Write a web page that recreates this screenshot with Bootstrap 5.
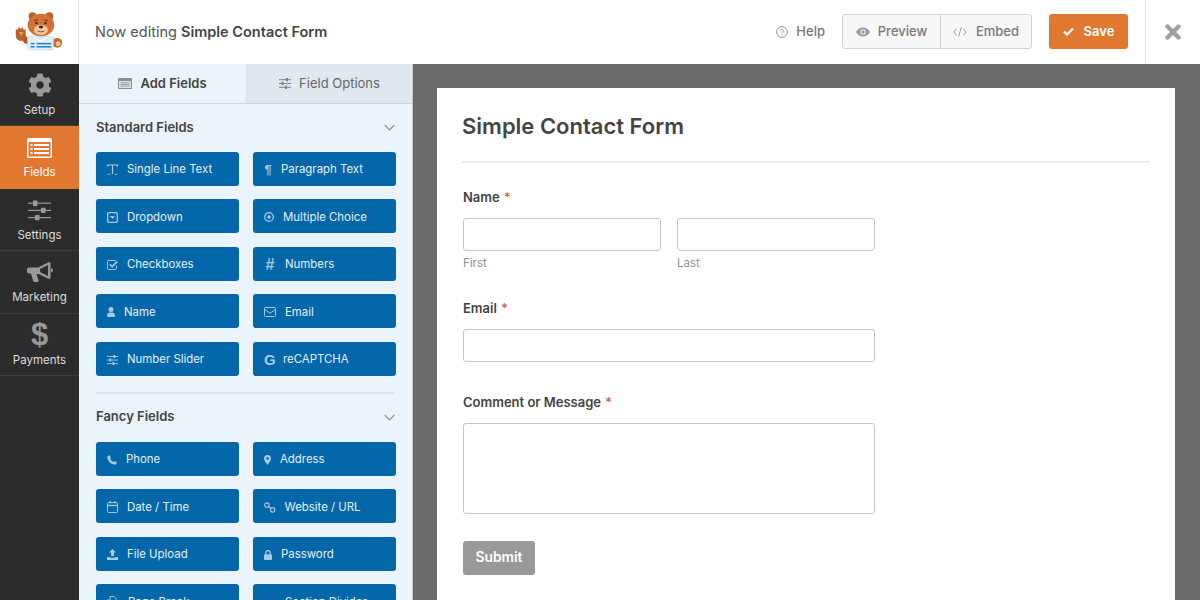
<!DOCTYPE html>
<html lang="en">
<head>
    <meta charset="UTF-8">
    <meta name="viewport" content="width=device-width, initial-scale=1.0">
    <title>Form Builder</title>
    <link href="https://cdn.jsdelivr.net/npm/bootstrap@5.3.0/dist/css/bootstrap.min.css" rel="stylesheet">
    <style>
        html, body { height: 600px; overflow: hidden; }
        body { font-family: Inter, "Liberation Sans", sans-serif; color: #444; background: #6b6b6b; }

        /* top bar */
        .top-bar { height: 63.5px; background: #fff; }
        .logo-cell { width: 79px; border-right: 1px solid #e4e4e4; }
        .now-editing { font-size: 14.5px; color: #555; padding-left: 16px; }
        .now-editing strong { font-weight: 600; color: #444; }
        .help-link { font-size: 13px; font-weight: 500; color: #777; margin-right: 17px; gap: 8px; }
        .top-btn { height: 35px; font-size: 13px; font-weight: 500; color: #777; background: #f8f8f8; border: 1px solid #d2d2d2; border-radius: 3px; gap: 9px; padding: 0 12px; }
        .top-btn.preview-btn { width: 99px; gap: 8px; }
        .top-btn.embed-btn { width: 92px; }
        .save-btn { width: 79px; height: 35px; margin-left: 17px; font-size: 13px; font-weight: 600; color: #fff; background: #e27730; border: 0; border-radius: 3px; gap: 10px; padding: 0; }
        .close-cell { width: 55px; margin-left: 17px; border-left: 1px solid #e4e4e4; }

        /* left rail */
        .main-area { height: 536.5px; }
        .side-rail { width: 79px; background: #2c2c2c; flex-shrink: 0; }
        .rail-item { height: 62.5px; color: #ddd; font-size: 11.5px; border-bottom: 1px solid #3d3d3d; padding-top: 7.5px; }
        .rail-item.current { background: #e27730; color: #fff; border-bottom-color: #e27730; }
        .rail-icon { height: 28px; margin-bottom: 2.5px; }
        .rail-dollar { font-family: "Liberation Sans", sans-serif; font-size: 31px; font-weight: 700; line-height: 28px; color: #999; }

        /* fields panel */
        .field-panel { width: 334px; background: #ebf3fb; border-right: 1px solid #c8ccd0; flex-shrink: 0; overflow: hidden; }
        .panel-tab { height: 40.5px; font-size: 13px; gap: 8px; }
        .panel-tab.on { width: 167px; font-weight: 600; color: #444; background: #ebf3fb; border-bottom: 1px solid #ced7e0; }
        .panel-tab.off { flex-grow: 1; color: #666; background: #e0e8f0; border-bottom: 1px solid #ced7e0; border-left: 1px solid #d8dfe6; }
        .panel-body { padding: 0 17px 0 17px; }
        .group-title { height: 47.8px; font-size: 13px; font-weight: 600; color: #444; padding-bottom: 1px; }
        .button-grid { display: grid; grid-template-columns: 143px 143px; column-gap: 14px; row-gap: 13.5px; }
        .field-btn { height: 34px; background: #0367a9; color: #e4f0fb; font-size: 11.4px; border: 0; border-radius: 3px; padding: 2px 0 0 11px; gap: 9px; white-space: nowrap; }
        .field-btn:hover { background: #0367a9; color: #e4f0fb; }
        .field-btn svg { flex-shrink: 0; }
        .field-glyph { color: #a6cbea; font-weight: 700; font-family: "Liberation Sans", sans-serif; text-align: center; flex-shrink: 0; }
        .paragraph-mark { width: 8px; font-size: 13px; }
        .number-mark { width: 12px; font-size: 16px; }
        .g-mark { width: 10px; font-size: 15px; }
        .group-rule { border: 0; border-top: 2px solid #dde4ec; margin: 16px 0 0; opacity: 1; }

        /* form preview */
        .canvas-area { padding: 24.5px 25px 0 24px; overflow: hidden; }
        .form-sheet { background: #fff; height: 600px; padding: 24px 25px 0 25px; }
        .sheet-title { font-size: 22px; font-weight: 600; color: #444; line-height: 28px; margin: 0 0 21px; }
        .sheet-rule { border: 0; border-top: 2px solid #eee; margin: 0 0 25px; opacity: 1; }
        .sheet-field { width: 412px; margin-left: 1px; }
        .sheet-label { font-size: 13px; font-weight: 600; color: #444; line-height: 18px; margin-bottom: 12px; display: block; }
        .sheet-label span { color: #c8514e; font-weight: 400; margin-left: 1px; }
        .sheet-input { height: 33px; border: 1px solid #c6c6c6; border-radius: 3px; padding: 0; }
        .sheet-area { height: 91px; resize: none; }
        .name-pair { gap: 16px; }
        .name-pair > div { width: 198px; }
        .sub-note { font-size: 11.5px; color: #909090; line-height: 14px; margin-top: 5px; }
        .email-field { margin-top: 29px; }
        .message-field { margin-top: 30.5px; }
        .submit-btn { width: 72px; height: 34px; padding: 0; margin: 27px 0 0 1px; font-size: 13.8px; font-weight: 600; color: #fff; background: #999; border: 0; border-radius: 3px; }
    </style>
</head>
<body>
    <!-- Top bar -->
    <header class="top-bar d-flex align-items-center">
        <div class="logo-cell h-100 d-flex align-items-center justify-content-center flex-shrink-0">
            <svg width="79" height="63" viewBox="0 0 79 63">
                <circle cx="58" cy="43" r="5" fill="#c7692f"/>
                <circle cx="59" cy="44" r="2.500" fill="#e8c9a8"/>
                <rect x="23" y="36" width="6" height="8" rx="3" fill="#a85a28" transform="rotate(-35 26 40)"/>
                <path d="M16 29l2 1 1-3 2 2 2-2 1 3 2-1v7a5 5 0 0 1-5 5 5 5 0 0 1-5-5z" fill="#b9622a"/>
                <path d="M19 32h5l-2.500 4z" fill="#e0a040"/>
                <circle cx="33" cy="16" r="4" fill="#b9622a"/>
                <circle cx="50" cy="16" r="4" fill="#b9622a"/>
                <ellipse cx="41.500" cy="25" rx="13.500" ry="11.500" fill="#d27135"/>
                <ellipse cx="41.500" cy="30" rx="7" ry="5" fill="#f3c9a0"/>
                <circle cx="37" cy="23" r="1.200" fill="#3a2418"/>
                <circle cx="46" cy="23" r="1.200" fill="#3a2418"/>
                <path d="M34.500 20.500l4-.8M44.500 19.700l4 .8" stroke="#5c3319" stroke-width="1" fill="none"/>
                <ellipse cx="41.500" cy="27" rx="2.200" ry="1.400" fill="#3a2418"/>
                <path d="M38 31q3.500 2 7 0" stroke="#8a4a22" stroke-width="1" fill="none"/>
                <path d="M28 37h26v11a2 2 0 0 1-2 2H30a2 2 0 0 1-2-2z" fill="#e3f1fb" stroke="#b9d4e8" stroke-width=".7"/>
                <path d="M34 36l7 4 7-4 1 2-8 5-8-5z" fill="#fff" stroke="#b9d4e8" stroke-width=".5"/>
                <rect x="31" y="43" width="4" height="1.600" fill="#2a88c8"/>
                <rect x="37" y="43" width="15" height="1.600" fill="#2a88c8"/>
                <rect x="31" y="46.200" width="4" height="1.600" fill="#2a88c8"/>
                <rect x="37" y="46.200" width="15" height="1.600" fill="#2a88c8"/>
            </svg>
        </div>
        <div class="now-editing flex-grow-1">Now editing <strong>Simple Contact Form</strong></div>
        <div class="help-link d-flex align-items-center">
            <svg width="12" height="12" viewBox="0 0 12 12" fill="none" stroke="#999"><circle cx="6" cy="6" r="5.400"/><path d="M4.500 4.700a1.500 1.500 0 1 1 2.300 1.300c-.5.3-.8.6-.8 1.200"/><path d="M6 8.400v1" /></svg>
            <span>Help</span>
        </div>
        <div class="btn-group">
            <button type="button" class="btn top-btn preview-btn d-flex align-items-center justify-content-center">
                <svg width="14" height="10" viewBox="0 0 14 10"><path fill="#999" fill-rule="evenodd" d="M7 .5c3 0 5.500 2 7 4.500-1.500 2.500-4 4.500-7 4.500S1.500 7.500 0 5C1.500 2.500 4 .5 7 .5zM7 2.200a2.800 2.800 0 1 0 0 5.600 2.800 2.800 0 0 0 0-5.600z"/><circle cx="7" cy="5" r="1.700" fill="#999"/></svg>
                <span>Preview</span>
            </button>
            <button type="button" class="btn top-btn embed-btn d-flex align-items-center justify-content-center">
                <svg width="14" height="10" viewBox="0 0 14 10" fill="none" stroke="#999"><path d="M3.500 1.500L.8 5l2.700 3.500M10.500 1.500L13.200 5l-2.700 3.500M8.300.5L5.700 9.500"/></svg>
                <span>Embed</span>
            </button>
        </div>
        <button type="button" class="btn save-btn d-flex align-items-center justify-content-center">
            <svg width="11" height="9" viewBox="0 0 11 9" fill="none" stroke="#fff" stroke-width="2.400"><path d="M1 4.500l3 3 6-6"/></svg>
            <span>Save</span>
        </button>
        <div class="close-cell h-100 d-flex align-items-center justify-content-center">
            <svg width="16" height="16" viewBox="0 0 16 16" fill="none" stroke="#a0a0a0" stroke-width="4.400" stroke-linecap="round"><path d="M2.500 2.500l11 11M13.500 2.500l-11 11"/></svg>
        </div>
    </header>

    <div class="main-area d-flex">
        <!-- Left rail -->
        <nav class="side-rail">
            <div class="rail-item d-flex flex-column align-items-center">
                <div class="rail-icon d-flex align-items-center">
                    <svg width="24" height="24" viewBox="0 0 512 512"><path fill="#999" d="M487.400 315.700l-42.600-24.600c4.300-23.200 4.300-47 0-70.200l42.600-24.600c4.900-2.800 7.100-8.600 5.500-14-11.100-35.600-30-67.800-54.700-94.600-3.800-4.100-10-5.100-14.800-2.300L380.800 110c-17.900-15.400-38.500-27.300-60.800-35.100V25.800c0-5.600-3.900-10.500-9.400-11.700-36.700-8.200-74.300-7.800-109.200 0-5.500 1.200-9.400 6.100-9.400 11.700V75c-22.200 7.900-42.800 19.800-60.800 35.100L88.700 85.500c-4.900-2.800-11-1.900-14.800 2.300-24.700 26.700-43.600 58.900-54.700 94.600-1.700 5.400.6 11.200 5.500 14L67.300 221c-4.300 23.200-4.300 47 0 70.200l-42.600 24.600c-4.900 2.800-7.100 8.600-5.500 14 11.100 35.600 30 67.800 54.700 94.600 3.800 4.100 10 5.100 14.800 2.300l42.600-24.600c17.900 15.400 38.500 27.300 60.800 35.100v49.200c0 5.600 3.900 10.500 9.400 11.700 36.700 8.200 74.300 7.800 109.200 0 5.500-1.200 9.400-6.100 9.400-11.700v-49.200c22.200-7.900 42.800-19.800 60.800-35.100l42.600 24.600c4.900 2.800 11 1.900 14.800-2.300 24.700-26.700 43.600-58.900 54.700-94.600 1.500-5.500-.7-11.300-5.600-14.100zM256 336c-44.100 0-80-35.900-80-80s35.900-80 80-80 80 35.900 80 80-35.900 80-80 80z"/></svg>
                </div>
                <span>Setup</span>
            </div>
            <div class="rail-item current d-flex flex-column align-items-center">
                <div class="rail-icon d-flex align-items-center">
                    <svg width="25" height="20" viewBox="0 0 25 20"><rect width="25" height="20" rx="1.500" fill="#fff"/><rect x="1.500" y="4" width="22" height="14.500" fill="#e27730"/><g fill="#fff"><rect x="3.500" y="6" width="2" height="2"/><rect x="3.500" y="10" width="2" height="2"/><rect x="3.500" y="14" width="2" height="2"/><rect x="7" y="6" width="15" height="2"/><rect x="7" y="10" width="15" height="2"/><rect x="7" y="14" width="15" height="2"/></g></svg>
                </div>
                <span>Fields</span>
            </div>
            <div class="rail-item d-flex flex-column align-items-center">
                <div class="rail-icon d-flex align-items-center">
                    <svg width="23" height="21" viewBox="0 0 23 21" fill="#999"><rect y="2.600" width="23" height="1.200"/><rect x="5" y=".5" width="4.500" height="5.400" rx=".5"/><rect y="9.800" width="23" height="1.200"/><rect x="13" y="7.700" width="4.500" height="5.400" rx=".5"/><rect y="17" width="23" height="1.200"/><rect x="7" y="14.900" width="4.500" height="5.400" rx=".5"/></svg>
                </div>
                <span>Settings</span>
            </div>
            <div class="rail-item d-flex flex-column align-items-center">
                <div class="rail-icon d-flex align-items-center">
                    <svg width="26" height="23" viewBox="0 0 26 23"><path fill="#999" d="M2 6.500h9L21 1.500l1.500-.5 1 1v15l-1 1-1.500-.5-9.500-4.500-2 0 2 6.500c.2.800-.3 1.500-1 1.500H7.500c-.5 0-1-.3-1.200-.8L4 12.500H2c-1 0-2-1-2-2v-2c0-1 1-2 2-2z"/><path fill="#2c2c2c" d="M21 4l-8 4v3l8 4z"/><path fill="#999" d="M24 7c1.200.5 2 1.200 2 2.300s-.8 1.900-2 2.300z"/></svg>
                </div>
                <span>Marketing</span>
            </div>
            <div class="rail-item d-flex flex-column align-items-center">
                <div class="rail-icon rail-dollar d-flex align-items-center">$</div>
                <span>Payments</span>
            </div>
        </nav>

        <!-- Fields panel -->
        <aside class="field-panel">
            <div class="d-flex">
                <div class="panel-tab on d-flex align-items-center justify-content-center">
                    <svg width="14" height="11" viewBox="0 0 14 11"><rect width="14" height="11" rx="1" fill="#8a8f94"/><rect x="1" y="3" width="12" height="7" fill="#dfe4e8"/><path d="M2.500 4.800h9M2.500 6.500h9M2.500 8.200h9" stroke="#8a8f94" stroke-width=".8"/></svg>
                    <span>Add Fields</span>
                </div>
                <div class="panel-tab off d-flex align-items-center justify-content-center">
                    <svg width="12" height="11" viewBox="0 0 12 11" fill="#7c8288"><rect y="1.200" width="12" height="1"/><rect x="7" y="0" width="2" height="3.400"/><rect y="5" width="12" height="1"/><rect x="2.500" y="3.800" width="2" height="3.400"/><rect y="8.800" width="12" height="1"/><rect x="6" y="7.600" width="2" height="3.400"/></svg>
                    <span>Field Options</span>
                </div>
            </div>
            <div class="panel-body">
                <div class="group-title d-flex align-items-center justify-content-between">
                    <span>Standard Fields</span>
                    <svg width="11" height="7" viewBox="0 0 11 7" fill="none" stroke="#8a9199" stroke-width="1.200"><path d="M.7 1l4.800 4.800L10.300 1"/></svg>
                </div>
                <div class="button-grid">
                    <button type="button" class="btn field-btn d-flex align-items-center"><svg width="11" height="11" viewBox="0 0 11 11" fill="none" stroke="#a6cbea" stroke-width="1.200"><path d="M.6 2.600V1h9.800v1.600M5.500 1v9"/><path d="M.8 10.300h2.400M7.800 10.300h2.400" stroke-width=".9"/></svg><span>Single Line Text</span></button>
                    <button type="button" class="btn field-btn d-flex align-items-center"><span class="field-glyph paragraph-mark">¶</span><span>Paragraph Text</span></button>
                    <button type="button" class="btn field-btn d-flex align-items-center"><svg width="11" height="11" viewBox="0 0 11 11"><rect x=".7" y=".7" width="9.600" height="9.600" rx="1.200" fill="none" stroke="#a6cbea" stroke-width="1.300"/><path d="M3 4h5L5.500 7z" fill="#a6cbea"/></svg><span>Dropdown</span></button>
                    <button type="button" class="btn field-btn d-flex align-items-center"><svg width="10" height="10" viewBox="0 0 10 10"><circle cx="5" cy="5" r="4.300" fill="none" stroke="#a6cbea" stroke-width="1.200"/><circle cx="5" cy="5" r="1.700" fill="#a6cbea"/></svg><span>Multiple Choice</span></button>
                    <button type="button" class="btn field-btn d-flex align-items-center"><svg width="11" height="10" viewBox="0 0 11 10" fill="none" stroke="#a6cbea"><path d="M9.500 5.500v3a1 1 0 0 1-1 1h-7a1 1 0 0 1-1-1v-7a1 1 0 0 1 1-1h7"/><path d="M2.800 4.200l2.400 2.400L10.300 1.400" stroke-width="1.600"/></svg><span>Checkboxes</span></button>
                    <button type="button" class="btn field-btn d-flex align-items-center"><span class="field-glyph number-mark">#</span><span>Numbers</span></button>
                    <button type="button" class="btn field-btn d-flex align-items-center"><svg width="8" height="10" viewBox="0 0 8 10" fill="#a6cbea"><circle cx="4" cy="2.500" r="2.500"/><path d="M0 8.500C0 6.500 1.500 5.500 2.500 5.500h3C6.500 5.500 8 6.500 8 8.500V9a1 1 0 0 1-1 1H1a1 1 0 0 1-1-1z"/></svg><span>Name</span></button>
                    <button type="button" class="btn field-btn d-flex align-items-center"><svg width="12" height="10" viewBox="0 0 12 10" fill="none" stroke="#a6cbea"><rect x=".5" y=".5" width="11" height="9" rx="1"/><path d="M.8 2.500L6 6.300l5.200-3.800"/></svg><span>Email</span></button>
                    <button type="button" class="btn field-btn d-flex align-items-center"><svg width="11" height="10" viewBox="0 0 11 10" fill="#a6cbea"><rect y="1" width="11" height=".9"/><rect x="6.500" y="0" width="1.800" height="3"/><rect y="4.600" width="11" height=".9"/><rect x="2.300" y="3.500" width="1.800" height="3"/><rect y="8.200" width="11" height=".9"/><rect x="5.500" y="7" width="1.800" height="3"/></svg><span>Number Slider</span></button>
                    <button type="button" class="btn field-btn d-flex align-items-center"><span class="field-glyph g-mark">G</span><span>reCAPTCHA</span></button>
                </div>
                <hr class="group-rule">
                <div class="group-title d-flex align-items-center justify-content-between">
                    <span>Fancy Fields</span>
                    <svg width="11" height="7" viewBox="0 0 11 7" fill="none" stroke="#8a9199" stroke-width="1.200"><path d="M.7 1l4.800 4.800L10.300 1"/></svg>
                </div>
                <div class="button-grid">
                    <button type="button" class="btn field-btn d-flex align-items-center"><svg width="10" height="10" viewBox="0 0 10 10" fill="#a6cbea"><path d="M.5 1.200L2.500.2l1.600 2.600-1 1a6 6 0 0 0 3.100 3.100l1-1L10 7.500l-1 2C4.500 10.500-.5 5.500.5 1.200z"/></svg><span>Phone</span></button>
                    <button type="button" class="btn field-btn d-flex align-items-center"><svg width="7" height="10" viewBox="0 0 7 10"><path fill="#a6cbea" fill-rule="evenodd" d="M3.500 0A3.500 3.500 0 0 1 7 3.500C7 5.500 4.500 8.500 3.500 10 2.500 8.500 0 5.500 0 3.500A3.500 3.500 0 0 1 3.500 0zm0 2.200a1.300 1.300 0 1 0 0 2.600 1.300 1.300 0 0 0 0-2.600z"/></svg><span>Address</span></button>
                    <button type="button" class="btn field-btn d-flex align-items-center"><svg width="11" height="12" viewBox="0 0 11 12" fill="none" stroke="#a6cbea"><rect x=".5" y="1.500" width="10" height="10" rx="1"/><path d="M.5 4.500h10" stroke-width="1.300"/><path d="M3 0v2.500M8 0v2.500" stroke-width="1.200"/></svg><span>Date / Time</span></button>
                    <button type="button" class="btn field-btn d-flex align-items-center"><svg width="11.500" height="11" viewBox="0 0 12 11" fill="none" stroke="#a6cbea" stroke-width="1.200"><circle cx="3" cy="3" r="2.300"/><circle cx="9" cy="8" r="2.300"/><path d="M4.800 4.500L7.200 6.500"/></svg><span>Website / URL</span></button>
                    <button type="button" class="btn field-btn d-flex align-items-center"><svg width="11" height="11" viewBox="0 0 11 11" fill="#a6cbea"><path d="M5.500 0L9 3.500H7V7H4V3.500H2z"/><path d="M0 8h3v.8h5V8h3v3H0z"/></svg><span>File Upload</span></button>
                    <button type="button" class="btn field-btn d-flex align-items-center"><svg width="8" height="10" viewBox="0 0 8 10"><path fill="none" stroke="#a6cbea" stroke-width="1.300" d="M1.800 4.500V2.800a2.200 2.200 0 0 1 4.400 0v1.700"/><rect y="4.200" width="8" height="5.800" rx="1" fill="#a6cbea"/></svg><span>Password</span></button>
                    <button type="button" class="btn field-btn d-flex align-items-center"><svg width="12" height="12" viewBox="0 0 12 12" fill="none" stroke="#a6cbea"><path d="M3 .5h4l2 2v6H3zM1 3v8h6"/></svg><span>Page Break</span></button>
                    <button type="button" class="btn field-btn d-flex align-items-center"><svg width="12" height="6" viewBox="0 0 12 6" fill="#a6cbea"><rect y="2.500" width="12" height="1.200"/></svg><span>Section Divider</span></button>
                </div>
            </div>
        </aside>

        <!-- Form preview -->
        <main class="canvas-area flex-grow-1">
            <div class="form-sheet">
                <h1 class="sheet-title">Simple Contact Form</h1>
                <hr class="sheet-rule">
                <div class="sheet-field">
                    <label class="sheet-label">Name <span>*</span></label>
                    <div class="name-pair d-flex">
                        <div>
                            <input type="text" class="form-control sheet-input">
                            <div class="sub-note">First</div>
                        </div>
                        <div>
                            <input type="text" class="form-control sheet-input">
                            <div class="sub-note">Last</div>
                        </div>
                    </div>
                </div>
                <div class="sheet-field email-field">
                    <label class="sheet-label">Email <span>*</span></label>
                    <input type="text" class="form-control sheet-input">
                </div>
                <div class="sheet-field message-field">
                    <label class="sheet-label">Comment or Message <span>*</span></label>
                    <textarea class="form-control sheet-input sheet-area"></textarea>
                </div>
                <button type="button" class="btn submit-btn">Submit</button>
            </div>
        </main>
    </div>

    <script src="https://cdn.jsdelivr.net/npm/bootstrap@5.3.0/dist/js/bootstrap.bundle.min.js"></script>
</body>
</html>
